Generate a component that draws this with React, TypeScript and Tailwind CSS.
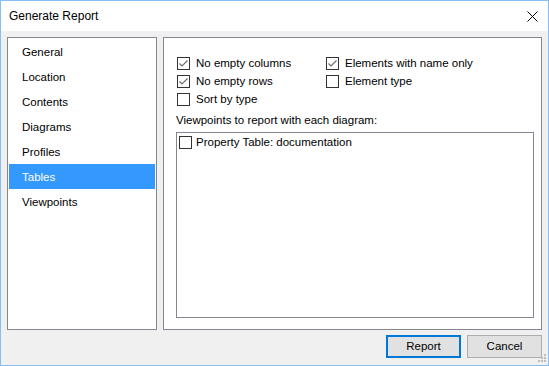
import React from "react";

function Check({ checked }: { checked?: boolean }) {
  return (
    <span className="w-[13px] h-[13px] border border-[#333333] bg-white flex items-center justify-center shrink-0">
      {checked && (
        <svg width="11" height="11" viewBox="0 0 11 11">
          <polyline points="1.5,5.5 4,8 9.5,2.5" fill="none" stroke="#6d6d6d" strokeWidth="1.2" />
        </svg>
      )}
    </span>
  );
}

function CheckRow({ label, checked }: { label: string; checked?: boolean }) {
  return (
    <div className="h-[18px] flex items-center gap-[6px]">
      <Check checked={checked} />
      <span className="pt-[1px]">{label}</span>
    </div>
  );
}

export default function App() {
  const items = ["General", "Location", "Contents", "Diagrams", "Profiles", "Tables", "Viewpoints"];
  return (
    <div
      className="relative w-[549px] h-[366px] border border-[#86bff0] bg-[#f0f0f0] flex flex-col text-[11.5px] text-black"
      style={{ fontFamily: '"Liberation Sans", Arial, sans-serif' }}
    >
      <div className="h-[30px] bg-white flex items-center justify-between pl-[8px] pr-[9px] shrink-0">
        <span className="text-[12px]">Generate Report</span>
        <svg width="11" height="11" viewBox="0 0 11 11" className="mr-[1px]">
          <path d="M0.5 0.5 L10.5 10.5 M10.5 0.5 L0.5 10.5" stroke="#000" strokeWidth="1" />
        </svg>
      </div>
      <div className="flex-1 flex flex-col px-[6px] pt-[6px] pb-[7px]">
        <div className="flex gap-[6px] h-[293px]">
          <div className="w-[150px] border border-[#828790] bg-white p-[1px]">
            {items.map((it) => (
              <div
                key={it}
                className={`h-[25px] flex items-center pl-[13px] pt-[2px] ${it === "Tables" ? "bg-[#3399ff] text-white" : ""}`}
              >
                {it}
              </div>
            ))}
          </div>
          <div className="flex-1 border border-[#828790] bg-white flex flex-col pl-[12px] pr-[7px] pt-[16px] pb-[11px]">
            <div className="flex pl-[1px]">
              <div className="w-[149px] flex flex-col">
                <CheckRow label="No empty columns" checked />
                <CheckRow label="No empty rows" checked />
                <CheckRow label="Sort by type" />
              </div>
              <div className="flex flex-col">
                <CheckRow label="Elements with name only" checked />
                <CheckRow label="Element type" />
              </div>
            </div>
            <div className="mt-[3px] h-[18px] flex items-center pt-[1px]">Viewpoints to report with each diagram:</div>
            <div className="mt-[3px] flex-1 border border-[#828790] bg-white pl-[2px] pt-[2px]">
              <div className="h-[15px] flex items-center gap-[4px]">
                <Check />
                <span className="pt-[1px]">Property Table: documentation</span>
              </div>
            </div>
          </div>
        </div>
        <div className="flex justify-end gap-[6px] mt-[5px]">
          <button className="w-[75px] h-[23px] bg-[#e1e1e1] border-2 border-[#0078d7] flex items-center justify-center">
            Report
          </button>
          <button className="w-[75px] h-[23px] bg-[#e1e1e1] border border-[#adadad] flex items-center justify-center">
            Cancel
          </button>
        </div>
      </div>
      <div className="absolute left-[536px] top-[352px]">
        <svg width="10" height="10" viewBox="0 0 10 10">
          <rect x="7" y="1" width="2" height="2" fill="#bcbcbc" />
          <rect x="4" y="4" width="2" height="2" fill="#bcbcbc" />
          <rect x="7" y="4" width="2" height="2" fill="#bcbcbc" />
          <rect x="1" y="7" width="2" height="2" fill="#bcbcbc" />
          <rect x="4" y="7" width="2" height="2" fill="#bcbcbc" />
          <rect x="7" y="7" width="2" height="2" fill="#bcbcbc" />
        </svg>
      </div>
    </div>
  );
}
